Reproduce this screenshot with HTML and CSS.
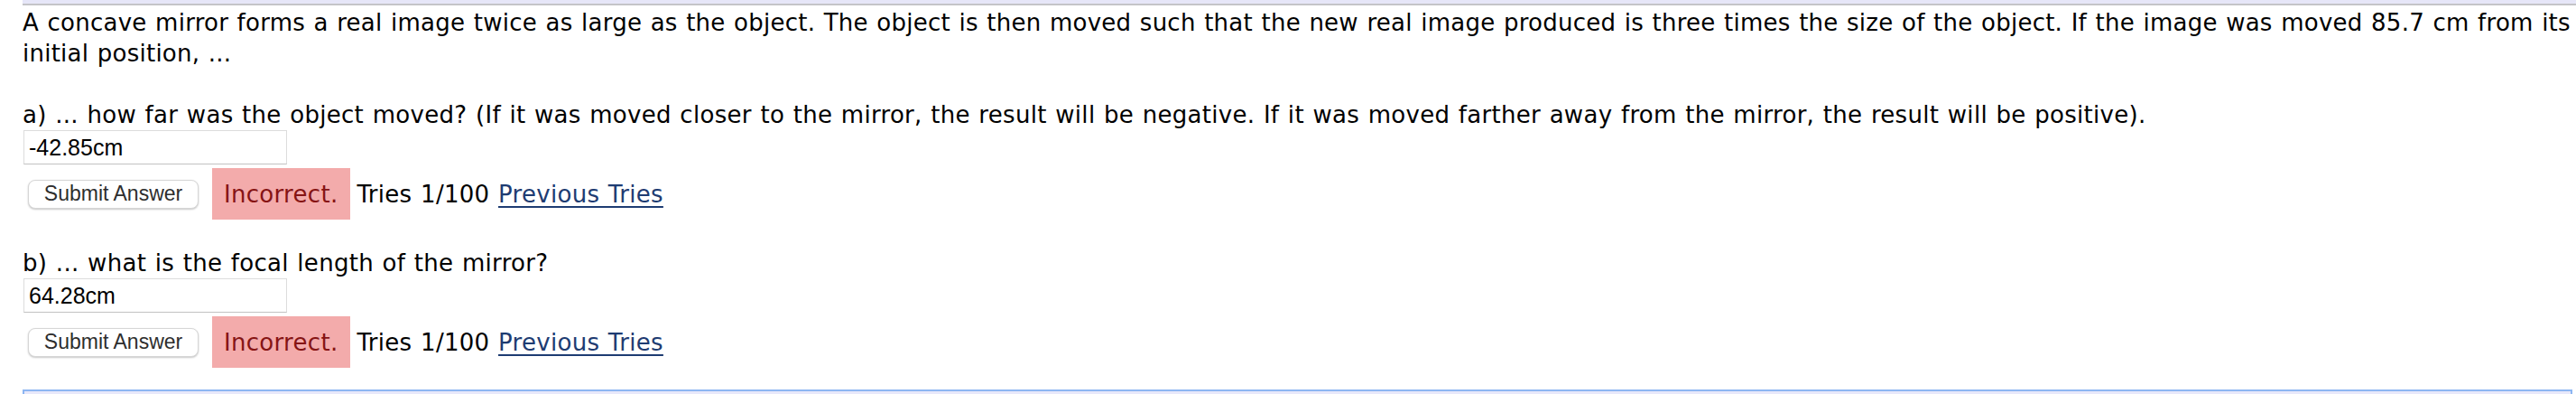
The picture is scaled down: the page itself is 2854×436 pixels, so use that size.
FILE: index.html
```html
<!DOCTYPE html>
<html>
<head>
<meta charset="utf-8">
<link rel="stylesheet" href="styles.css">
</head>
<body>
<div class="page">
  <div class="prev-box"></div>
  <div class="problem">
    <p class="question">A concave mirror forms a real image twice as large as the object. The object is then moved such that the new real image produced is three times the size of the object. If the image was moved 85.7 cm from its initial position, ...</p>
    <div class="part">
      <div class="part-label">a) ... how far was the object moved? (If it was moved closer to the mirror, the result will be negative. If it was moved farther away from the mirror, the result will be positive).</div>
      <input class="answer" type="text" value="-42.85cm">
      <div class="status-row">
        <button class="submit">Submit Answer</button>
        <span class="incorrect">Incorrect.</span>
        <span class="tries">Tries 1/100 <a href="#" class="prev-tries">Previous Tries</a></span>
      </div>
    </div>
    <div class="part part-b">
      <div class="part-label">b) ... what is the focal length of the mirror?</div>
      <input class="answer" type="text" value="64.28cm">
      <div class="status-row">
        <button class="submit">Submit Answer</button>
        <span class="incorrect">Incorrect.</span>
        <span class="tries">Tries 1/100 <a href="#" class="prev-tries">Previous Tries</a></span>
      </div>
    </div>
  </div>
  <div class="next-box"></div>
</div>
</body>
</html>
```
FILE: styles.css
```css
html, body {
  margin: 0;
  padding: 0;
  background: #ffffff;
}
body {
  overflow: hidden;
}
.page {
  padding: 0 0 0 25px;
  font-family: "DejaVu Sans", Verdana, sans-serif;
  font-size: 26px;
  color: #000000;
  word-spacing: 1px;
  letter-spacing: 0.25px;
}
.prev-box {
  height: 4px;
  background: #e6e6f8;
  border-bottom: 2px solid #c4c4c8;
}
.problem {
  padding-top: 2px;
  line-height: 34px;
}
.question {
  margin: 0 0 34px 0;
}
.part-label {
  line-height: 34px;
  letter-spacing: 0.3px;
}
.part-b {
  margin-top: 31px;
}
.answer {
  display: block;
  box-sizing: border-box;
  width: 292px;
  height: 38px;
  margin: 0 0 0 1px;
  padding: 0 5px;
  border: 1px solid #dcdcdc;
  border-bottom-color: #c2c2c2;
  background: #ffffff;
  font-family: "Liberation Sans", Arial, sans-serif;
  font-size: 25px;
  letter-spacing: 0;
  color: #000000;
  outline: none;
}
.status-row {
  display: flex;
  align-items: center;
  margin-top: 4px;
  height: 57px;
  letter-spacing: 0.3px;
}
.submit {
  box-sizing: border-box;
  width: 189px;
  height: 32px;
  margin: 0 15px 0 6px;
  padding: 0;
  background: #ffffff;
  border: 1px solid #d6d6d6;
  border-radius: 8px;
  box-shadow: 0 1px 2px rgba(0, 0, 0, 0.22);
  font-family: "Liberation Sans", Arial, sans-serif;
  font-size: 23px;
  letter-spacing: 0;
  color: #2e2e2e;
  word-spacing: 0;
}
.incorrect {
  display: flex;
  align-items: center;
  box-sizing: border-box;
  height: 57px;
  padding: 0 14px 0 13px;
  background: #f3abab;
  color: #861414;
}
.tries {
  margin-left: 7px;
  white-space: nowrap;
}
.prev-tries {
  color: #1e3c72;
  text-decoration: underline;
  text-decoration-thickness: 2px;
  text-underline-offset: 4px;
}
.next-box {
  margin-top: 24px;
  margin-right: 4px;
  height: 3px;
  background: #e8e8fa;
  border: 2px solid #8db6f2;
  border-bottom: none;
}
```
